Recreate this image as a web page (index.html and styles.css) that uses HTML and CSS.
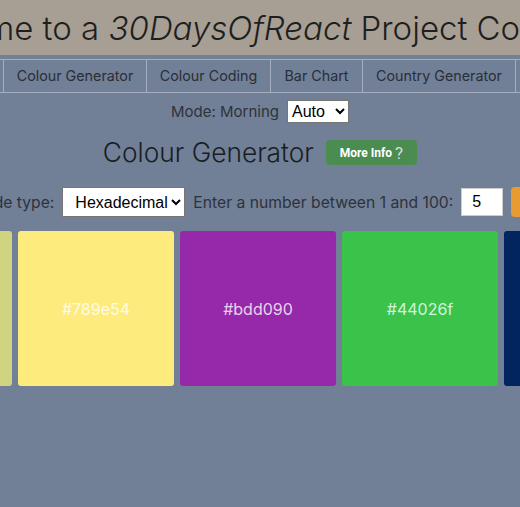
FILE: index.html
```html
<!DOCTYPE html>
<html lang="en">
<head>
<meta charset="utf-8">
<title>30DaysOfReact Project Collection</title>
<link rel="stylesheet" href="styles.css">
</head>
<body>
<div class="page">
  <header class="banner">
    <h1 class="title">Welcome to a <em>30DaysOfReact</em> Project Collection</h1>
  </header>
  <nav class="nav">
    <a class="nav-item nav-edge">Home</a>
    <a class="nav-item nav-cg">Colour Generator</a>
    <a class="nav-item nav-cc">Colour Coding</a>
    <a class="nav-item nav-bc">Bar Chart</a>
    <a class="nav-item nav-co">Country Generator</a>
    <a class="nav-item nav-edge">Twitter</a>
  </nav>
  <div class="mode-row">
    <span>Mode: Morning</span>
    <select class="mode-select"><option>Auto</option></select>
  </div>
  <div class="heading-row">
    <h2 class="heading">Colour Generator</h2>
    <button class="info-btn">More Info <span class="q">?</span></button>
  </div>
  <div class="controls">
    <span>Colour code type:</span>
    <select class="type-select"><option>Hexadecimal</option></select>
    <span>Enter a number between 1 and 100:</span>
    <input class="num-input" type="text" value="5">
    <button class="gen-btn">Generate</button>
  </div>
  <div class="swatches">
    <div class="swatch s1"><span>#d0d480</span></div>
    <div class="swatch s2"><span>#789e54</span></div>
    <div class="swatch s3"><span>#bdd090</span></div>
    <div class="swatch s4"><span>#44026f</span></div>
    <div class="swatch s5"><span>#02255f</span></div>
  </div>
</div>
</body>
</html>
```
FILE: styles.css
```css
html, body {
  margin: 0;
  padding: 0;
  background: #718096;
  overflow: hidden;
}
.page {
  width: 520px;
  min-height: 507px;
  display: flex;
  flex-direction: column;
  align-items: center;
  font-family: "Inter", "Noto Sans", sans-serif;
  color: #262a33;
}
.banner {
  width: 100%;
  background: #a89f94;
  display: flex;
  justify-content: center;
  height: 55px;
  align-items: center;
}
.title {
  margin: 0;
  white-space: nowrap;
  font-size: 33px;
  font-weight: 300;
  color: #1f1f1f;
  flex-shrink: 0;
}
.title em {
  font-style: italic;
}
.nav {
  display: flex;
  margin-top: 4px;
  flex-shrink: 0;
  white-space: nowrap;
}
.nav-item {
  display: block;
  box-sizing: border-box;
  height: 34px;
  line-height: 32px;
  border: 1px solid #a4aec0;
  margin-left: -1px;
  text-align: center;
  font-size: 14.3px;
  color: #2a2e38;
}
.nav-edge { width: 120px; }
.nav-cg { width: 144px; }
.nav-cc { width: 125px; }
.nav-bc { width: 93px; }
.nav-co { width: 154px; }
.mode-row {
  display: flex;
  align-items: center;
  gap: 8px;
  margin-top: 7px;
  font-size: 15px;
  color: #2e323c;
}
.mode-select {
  font-family: "Liberation Sans", Arial, sans-serif;
  font-size: 16px;
  height: 23px;
  width: 62px;
  background: #fff;
  color: #000;
}
.heading-row {
  display: flex;
  align-items: center;
  gap: 12px;
  margin-top: 14px;
}
.heading {
  margin: 0;
  font-size: 26.3px;
  font-weight: 300;
  color: #1a1d24;
}
.info-btn {
  background: #4b8c50;
  color: #fff;
  border: none;
  border-radius: 4px;
  height: 25px;
  padding: 0 14px;
  font-family: "Roboto", "Liberation Sans", sans-serif;
  font-weight: 700;
  font-size: 12px;
  display: flex;
  align-items: center;
  gap: 3px;
}
.info-btn .q {
  font-size: 17px;
  font-weight: 400;
  color: #d9dde0;
}
.controls {
  display: flex;
  align-items: center;
  gap: 8px;
  margin-top: 19px;
  white-space: nowrap;
  flex-shrink: 0;
  font-size: 15.7px;
  color: #2e323c;
}
.type-select {
  font-family: "Liberation Sans", Arial, sans-serif;
  font-size: 16px;
  height: 30px;
  width: 123px;
  background: #fff;
  color: #000;
  padding-left: 8px;
}
.num-input {
  font-family: "Liberation Sans", Arial, sans-serif;
  font-size: 16px;
  box-sizing: border-box;
  height: 28px;
  width: 42px;
  padding: 0 10px;
  border: 1px solid #ccc;
}
.gen-btn {
  background: #e89b30;
  color: #fff;
  border: none;
  border-radius: 4px;
  height: 30px;
  padding: 0 11px;
  font-family: "Inter", sans-serif;
  font-size: 15px;
}
.swatches {
  display: flex;
  gap: 6px;
  margin-top: 14px;
  margin-right: 4px;
  flex-shrink: 0;
}
.swatch {
  width: 156px;
  height: 155px;
  border-radius: 3px;
  display: flex;
  align-items: center;
  justify-content: center;
  color: rgba(255, 255, 255, 0.8);
  font-size: 16px;
}
.s1 { background: #d0d480; }
.s2 { background: #fdeb7e; }
.s3 { background: #9629aa; }
.s4 { background: #39c34b; }
.s5 { background: #02255f; }
```
